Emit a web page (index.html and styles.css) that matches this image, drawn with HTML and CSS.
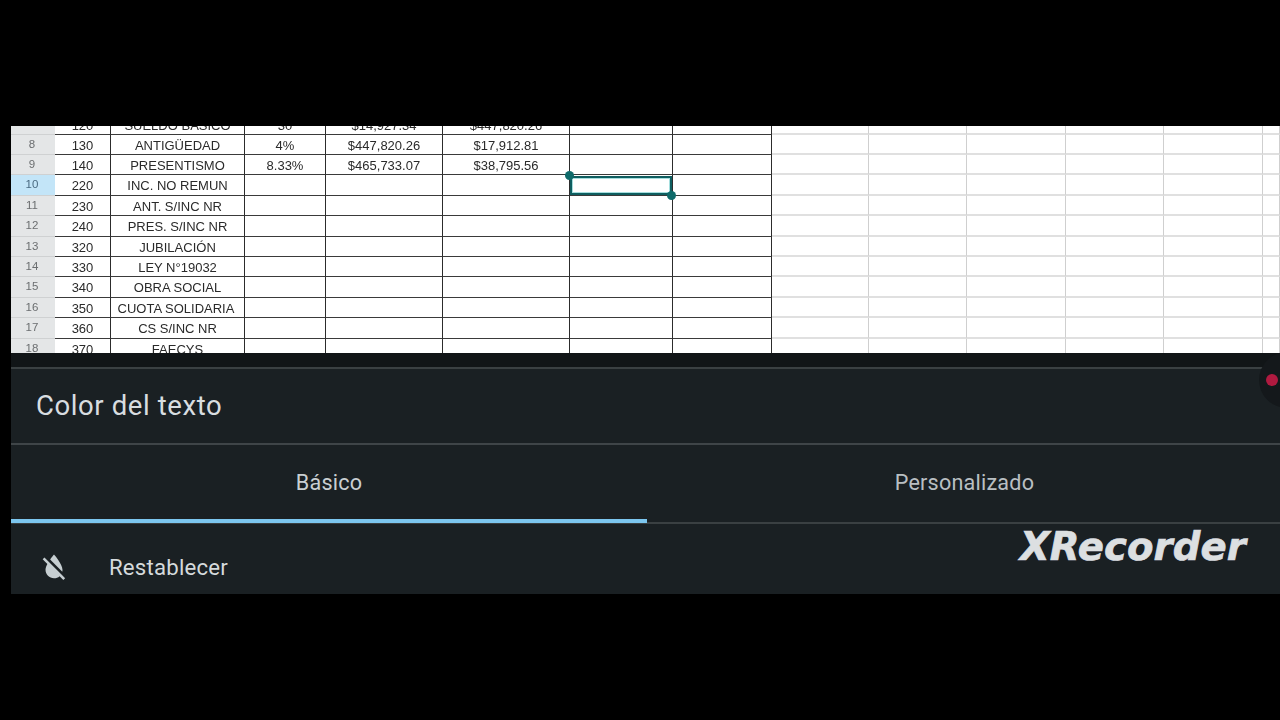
FILE: index.html
```html
<!DOCTYPE html>
<html lang="es">
<head>
<meta charset="utf-8">
<title>Color del texto</title>
<link rel="stylesheet" href="styles.css">
</head>
<body>
<main class="app">
  <section class="sheet">
    <div class="row row-top"><div class="h"></div><div class="c"><span>120</span></div><div class="c"><span>SUELDO BÁSICO</span></div><div class="c"><span>30</span></div><div class="c"><span>$14,927.34</span></div><div class="c"><span>$447,820.26</span></div><div class="c"></div><div class="c"></div><div class="l"></div><div class="l"></div><div class="l"></div><div class="l"></div><div class="l"></div><div class="l"></div></div>
    <div class="row"><div class="h">8</div><div class="c">130</div><div class="c">ANTIGÜEDAD</div><div class="c">4%</div><div class="c">$447,820.26</div><div class="c">$17,912.81</div><div class="c"></div><div class="c"></div><div class="l"></div><div class="l"></div><div class="l"></div><div class="l"></div><div class="l"></div><div class="l"></div></div>
    <div class="row"><div class="h">9</div><div class="c">140</div><div class="c">PRESENTISMO</div><div class="c">8.33%</div><div class="c">$465,733.07</div><div class="c">$38,795.56</div><div class="c"></div><div class="c"></div><div class="l"></div><div class="l"></div><div class="l"></div><div class="l"></div><div class="l"></div><div class="l"></div></div>
    <div class="row"><div class="h active">10</div><div class="c">220</div><div class="c">INC. NO REMUN</div><div class="c"></div><div class="c"></div><div class="c"></div><div class="c selected"><span class="handle handle-start"></span><span class="handle handle-end"></span></div><div class="c"></div><div class="l"></div><div class="l"></div><div class="l"></div><div class="l"></div><div class="l"></div><div class="l"></div></div>
    <div class="row"><div class="h">11</div><div class="c">230</div><div class="c">ANT. S/INC NR</div><div class="c"></div><div class="c"></div><div class="c"></div><div class="c"></div><div class="c"></div><div class="l"></div><div class="l"></div><div class="l"></div><div class="l"></div><div class="l"></div><div class="l"></div></div>
    <div class="row"><div class="h">12</div><div class="c">240</div><div class="c">PRES. S/INC NR</div><div class="c"></div><div class="c"></div><div class="c"></div><div class="c"></div><div class="c"></div><div class="l"></div><div class="l"></div><div class="l"></div><div class="l"></div><div class="l"></div><div class="l"></div></div>
    <div class="row"><div class="h">13</div><div class="c">320</div><div class="c">JUBILACIÓN</div><div class="c"></div><div class="c"></div><div class="c"></div><div class="c"></div><div class="c"></div><div class="l"></div><div class="l"></div><div class="l"></div><div class="l"></div><div class="l"></div><div class="l"></div></div>
    <div class="row"><div class="h">14</div><div class="c">330</div><div class="c">LEY N°19032</div><div class="c"></div><div class="c"></div><div class="c"></div><div class="c"></div><div class="c"></div><div class="l"></div><div class="l"></div><div class="l"></div><div class="l"></div><div class="l"></div><div class="l"></div></div>
    <div class="row"><div class="h">15</div><div class="c">340</div><div class="c">OBRA SOCIAL</div><div class="c"></div><div class="c"></div><div class="c"></div><div class="c"></div><div class="c"></div><div class="l"></div><div class="l"></div><div class="l"></div><div class="l"></div><div class="l"></div><div class="l"></div></div>
    <div class="row"><div class="h">16</div><div class="c">350</div><div class="c cuota">CUOTA SOLIDARIA</div><div class="c"></div><div class="c"></div><div class="c"></div><div class="c"></div><div class="c"></div><div class="l"></div><div class="l"></div><div class="l"></div><div class="l"></div><div class="l"></div><div class="l"></div></div>
    <div class="row"><div class="h">17</div><div class="c">360</div><div class="c">CS S/INC NR</div><div class="c"></div><div class="c"></div><div class="c"></div><div class="c"></div><div class="c"></div><div class="l"></div><div class="l"></div><div class="l"></div><div class="l"></div><div class="l"></div><div class="l"></div></div>
    <div class="row row-last"><div class="h">18</div><div class="c">370</div><div class="c">FAECYS</div><div class="c"></div><div class="c"></div><div class="c"></div><div class="c"></div><div class="c"></div><div class="l"></div><div class="l"></div><div class="l"></div><div class="l"></div><div class="l"></div><div class="l"></div></div>
  </section>
  <section class="panel">
    <div class="grip"></div>
    <h1 class="title">Color del texto</h1>
    <nav class="tabs">
      <div class="tab tab-on">Básico</div>
      <div class="tab tab-off">Personalizado</div>
    </nav>
    <div class="reset">
      <svg class="reset-icon" viewBox="0 0 24 24" aria-hidden="true"><path d="M18 14c0-4-6-10.8-6-10.8s-1.33 1.51-2.73 3.52l8.59 8.59c.09-.42.14-.86.14-1.31zm-.88 3.12L12.5 12.5 5.27 5.27 4 6.55l3.32 3.32C6.55 11.32 6 12.79 6 14c0 3.31 2.69 6 6 6 1.52 0 2.9-.57 3.96-1.5l2.63 2.63 1.27-1.27-2.74-2.74z"/></svg>
      <span>Restablecer</span>
    </div>
    <div class="watermark">XRecorder</div>
    <div class="rec"><span class="rec-dot"></span></div>
  </section>
</main>
</body>
</html>
```
FILE: styles.css
```css
* { box-sizing: border-box; }
html, body { margin: 0; height: 100%; background: #000; overflow: hidden; }
.app { width: 1269px; margin: 126px 0 0 11px; height: 468px; display: flex; flex-direction: column; overflow: hidden; position: relative; }
.sheet { height: 227px; display: grid; grid-template-rows: 8.6px repeat(10, 20.4px) 1fr; background: #fff; overflow: hidden; font: 13px/22px "Liberation Sans", Arial, sans-serif; color: #2a2a2a; filter: blur(.35px); }
.row { display: grid; grid-template-columns: 44px 56px 134px 81px 117px 127px 103px 99px 97px 98px 99px 98px 99px 1fr; min-height: 0; }
.h { background: #e4e6e7; color: #6b6e70; font-size: 11.5px; line-height: 18px; text-align: center; border-bottom: 1px solid #cfd1d2; padding-right: 2px; overflow: hidden; }
.h.active { background: #c3e5f8; color: #4a6a80; }
.c { border-right: 1px solid #2c2c2c; border-bottom: 1px solid #3a3a3a; text-align: center; overflow: hidden; white-space: nowrap; position: relative; }
.cuota { padding-right: 3px; }
.l { border-right: 1px solid #cfcfcf; border-bottom: 2px solid #e0e0e0; }
.row-top .c { display: flex; flex-direction: column; justify-content: flex-end; align-items: center; }
.row-top .c span { display: block; flex: none; margin-bottom: -3px; }
.row-last .c, .row-last .l, .row-last .h { border-bottom: 0; }
.c.selected { overflow: visible; }
.c.selected::after { content: ""; position: absolute; inset: 1px 0 0 0; border: 2px solid #0f5e60; box-shadow: inset 0 0 0 1px #a5dede; }
.handle { position: absolute; width: 9px; height: 9px; border-radius: 50%; background: #0f6a6a; z-index: 2; }
.handle-start { left: -5px; top: -4px; }
.handle-end { right: -4px; bottom: -5px; }
.panel { flex: 1; position: relative; background: #1a2023; display: flex; flex-direction: column; color: #d5dadc; font-family: Roboto, "Noto Sans", sans-serif; overflow: hidden; }
.grip { height: 16px; background: #111517; border-bottom: 2px solid #3a4042; flex: none; }
.title { margin: 0; height: 76px; flex: none; padding-left: 25px; font-size: 27.5px; line-height: 74px; font-weight: 400; letter-spacing: .6px; color: #d8dde0; border-bottom: 2px solid #3f4548; }
.tabs { display: grid; grid-template-columns: 636px 1fr; height: 79px; flex: none; border-bottom: 2px solid #3a4042; font-size: 21.6px; color: #b9bfc2; }
.tab { display: flex; align-items: center; justify-content: center; letter-spacing: .2px; }
.tab-off { padding: 0 0 2px 2px; }
.tab-on { color: #c9cfd2; border-bottom: 4px solid #7cc6ef; margin-bottom: -1px; }
.reset { display: flex; align-items: center; flex: 1; padding: 16px 0 0 26px; gap: 38px; font-size: 22.2px; color: #d5dadc; letter-spacing: .2px; }
.reset-icon { width: 34px; height: 34px; fill: #c6ced1; flex: none; }
.watermark { position: absolute; left: 1009px; top: 171px; font: italic 700 38.6px/46px "DejaVu Sans", sans-serif; letter-spacing: .1px; color: #dcdfe1; -webkit-text-stroke: .7px #dcdfe1; }
.rec { position: absolute; right: -35px; top: -1px; width: 56px; height: 56px; border-radius: 50%; background: #14181b; display: flex; align-items: center; justify-content: center; }
.rec-dot { width: 12px; height: 12px; border-radius: 50%; background: #b01a40; position: relative; left: -15px; }
```
